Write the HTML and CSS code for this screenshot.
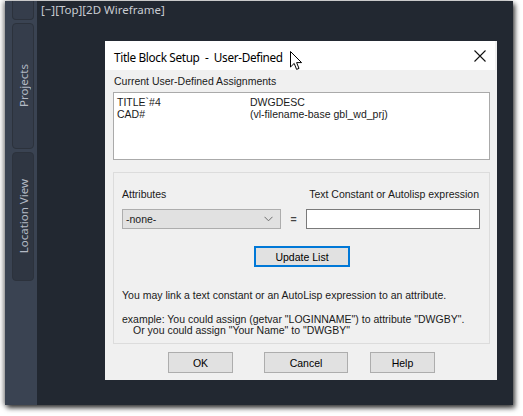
FILE: index.html
```html
<!DOCTYPE html>
<html lang="en">
<head>
    <meta charset="UTF-8">
    <title>Title Block Setup - User-Defined</title>
    <link rel="stylesheet" href="styles.css">
</head>
<body>
    <div class="app-frame">
        <!-- Palette tabs down the left edge -->
        <aside class="side-panel">
            <div class="side-tab side-tab-stub"></div>
            <div class="side-tab side-tab-projects"><span>Projects</span></div>
            <div class="side-tab side-tab-location"><span>Location View</span></div>
        </aside>

        <main class="drawing-area">
            <div class="viewport-label">[&minus;][Top][2D Wireframe]</div>

            <div class="dialog">
                <header class="dialog-titlebar">
                    <span class="dialog-title">Title Block Setup&nbsp; -&nbsp; User-Defined</span>
                    <svg class="mouse-cursor" width="13" height="20" viewBox="0 0 13 20">
                        <path d="M0.5 0.5 L0.5 16 L4.2 12.4 L6.6 18.4 L9 17.4 L6.6 11.6 L11.6 11.6 Z" fill="#fff" stroke="#000" stroke-width="1" stroke-linejoin="miter"/>
                    </svg>
                    <svg class="close-icon" width="12" height="12" viewBox="0 0 12 12">
                        <path d="M0.5 0.5 L11.5 11.5 M11.5 0.5 L0.5 11.5" stroke="#111" stroke-width="1.1"/>
                    </svg>
                </header>

                <div class="dialog-body">
                    <div class="section-label">Current User-Defined Assignments</div>
                    <div class="assign-list">
                        <span>TITLE`#4</span><span>DWGDESC</span>
                        <span>CAD#</span><span>(vl-filename-base gbl_wd_prj)</span>
                    </div>

                    <div class="group-box">
                        <div class="field-row field-labels">
                            <span class="attr-label">Attributes</span>
                            <span class="expr-label">Text Constant or Autolisp expression</span>
                        </div>
                        <div class="field-row">
                            <div class="combo">
                                <span>-none-</span>
                                <svg width="9" height="6" viewBox="0 0 9 6">
                                    <path d="M0.5 0.8 L4.5 4.8 L8.5 0.8" fill="none" stroke="#6d6d6d" stroke-width="1"/>
                                </svg>
                            </div>
                            <span class="equals">=</span>
                            <div class="text-input"></div>
                        </div>
                        <div class="update-row">
                            <button class="win-btn win-btn-default">Update List</button>
                        </div>
                        <p class="hint">You may link a text constant or an AutoLisp expression to an attribute.</p>
                        <p class="example">example: You could assign (getvar "LOGINNAME") to attribute "DWGBY".<br><span class="indent">Or you could assign "Your Name" to "DWGBY"</span></p>
                    </div>

                    <div class="dialog-buttons">
                        <button class="win-btn btn-ok">OK</button>
                        <button class="win-btn btn-cancel">Cancel</button>
                        <button class="win-btn btn-help">Help</button>
                    </div>
                </div>
            </div>
        </main>
    </div>
</body>
</html>
```

FILE: styles.css
```css
body {
    margin: 0;
    background: #fff;
    width: 523px;
    height: 416px;
    overflow: hidden;
    font-family: "Liberation Sans", Arial, sans-serif;
}

.app-frame {
    margin: 1px 0 0 5px;
    width: 508px;
    height: 404px;
    display: flex;
    background: #222831;
    box-shadow: 2px 3px 5px rgba(0, 0, 0, 0.75), -2px 0 5px rgba(0, 0, 0, 0.35);
}

/* Left palette strip */
.side-panel {
    width: 32px;
    flex-shrink: 0;
    background: #3a4352;
    display: flex;
    flex-direction: column;
    gap: 3px;
    padding: 0 3px 0 7px;
    box-sizing: border-box;
}
.side-tab {
    border: 1px solid #2c323c;
    border-radius: 4px;
    background: #353d4b;
    display: flex;
    align-items: center;
    justify-content: center;
    color: #b3b9c4;
    font-family: "Noto Sans", "Open Sans", sans-serif;
    font-size: 11.5px;
    flex-shrink: 0;
}
.side-tab span {
    writing-mode: vertical-rl;
    transform: rotate(180deg);
}
.side-tab-stub {
    height: 18px;
    border-top: none;
    border-radius: 0 0 4px 4px;
}
.side-tab-projects {
    height: 124px;
}
.side-tab-location {
    height: 127px;
    background: #2f3642;
}

.drawing-area {
    flex: 1;
    padding: 0 0 0 68px;
}
.viewport-label {
    margin: 1px 0 0 -64px;
    height: 16px;
    color: #c9ccd1;
    font-family: "Noto Sans", "Open Sans", sans-serif;
    font-size: 11.5px;
    line-height: 16px;
}

/* Dialog window */
.dialog {
    margin-top: 23px;
    width: 392px;
    background: #f0f0f0;
}
.dialog-titlebar {
    height: 29px;
    margin-right: 2px;
    background: #fff;
    display: flex;
    align-items: center;
    padding: 0 9px;
    position: relative;
}
.dialog-title {
    font-family: "Noto Sans", "Open Sans", sans-serif;
    font-size: 11.8px;
    letter-spacing: -0.35px;
    color: #000;
    margin-top: 2px;
}
.mouse-cursor {
    position: absolute;
    left: 185px;
    top: 10px;
}
.close-icon {
    margin-left: auto;
}

.dialog-body {
    padding: 5px 7px 7px 8px;
    font-size: 10.5px;
    color: #1a1a1a;
}
.section-label {
    padding-left: 1px;
    height: 17px;
    line-height: 13px;
}
.assign-list {
    height: 63px;
    background: #fff;
    border: 1px solid #aaaaaa;
    display: grid;
    grid-template-columns: 133px auto;
    grid-auto-rows: 12px;
    align-content: start;
    padding: 3px 0 0 3px;
    line-height: 12px;
}

.group-box {
    margin-top: 12px;
    border: 1px solid #dcdcdc;
    height: 172px;
    box-sizing: border-box;
    padding: 15px 9px 0 8px;
}
.field-row {
    display: flex;
    align-items: center;
}
.field-labels {
    height: 12px;
    line-height: 12px;
}
.expr-label {
    margin-left: auto;
    margin-right: 1px;
}
.field-labels + .field-row {
    margin-top: 9px;
}
.combo {
    width: 147px;
    height: 18px;
    border: 1px solid #adadad;
    background: #e1e1e1;
    display: flex;
    align-items: center;
    justify-content: space-between;
    padding: 0 7px 0 3px;
}
.equals {
    width: 25px;
    text-align: center;
    font-weight: bold;
    color: #444;
}
.text-input {
    width: 172px;
    height: 18px;
    border: 1px solid #7a7a7a;
    background: #fff;
}

.update-row {
    display: flex;
    justify-content: center;
    margin-top: 17px;
}

.win-btn {
    font-family: "Liberation Sans", Arial, sans-serif;
    font-size: 10.5px;
    color: #000;
    background: #e1e1e1;
    border: 1px solid #adadad;
    height: 21px;
    padding: 0;
}
.win-btn-default {
    width: 96px;
    border: 1px solid #0078d7;
    box-shadow: inset 0 0 0 1px #0078d7;
    margin-left: 2px;
}

.hint {
    margin: 22px 0 0;
    line-height: 13px;
}
.example {
    margin: 12px 0 0;
    line-height: 11px;
    white-space: nowrap;
}
.example .indent {
    padding-left: 11px;
}

.dialog-buttons {
    display: flex;
    padding-left: 55px;
    margin-top: 8px;
}
.btn-ok,
.btn-help {
    width: 65px;
}
.btn-cancel {
    width: 84px;
    margin-left: 31px;
}
.btn-help {
    margin-left: 22px;
}
```
